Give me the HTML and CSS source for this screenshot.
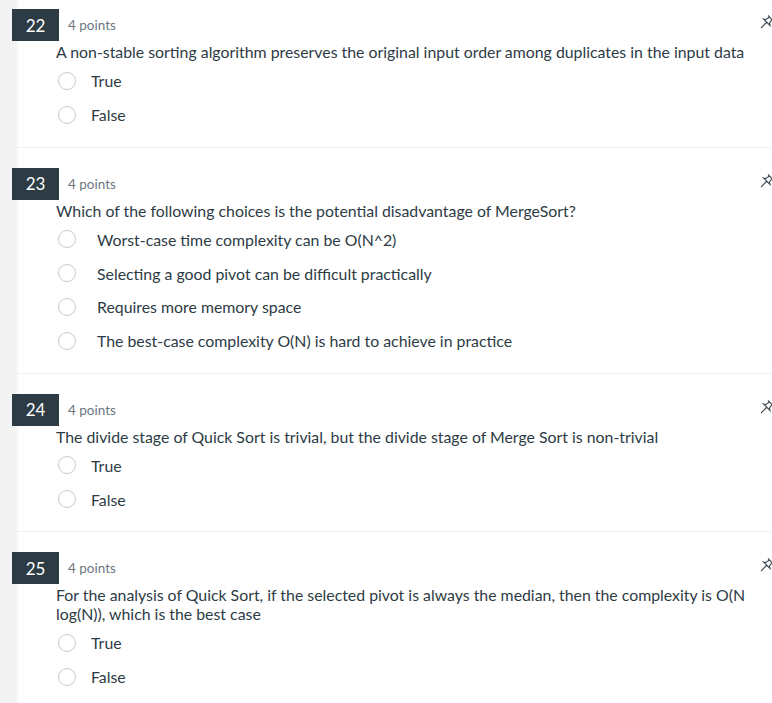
FILE: index.html
```html
<!DOCTYPE html>
<html>
<head>
<meta charset="utf-8">
<link rel="stylesheet" href="styles.css">
</head>
<body>
<div class="page">
  <div class="question">
    <div class="q-header">
      <span class="q-num">22</span>
      <span class="q-points">4 points</span>
      <svg class="pin" viewBox="0 0 16 16" width="16" height="16"><g fill="none" stroke="#3d4a52" stroke-width="1.1"><path d="M9 1.5 L14.5 7 M10.5 3 L7 5.5 L4.5 5 L11 11.5 L10.5 9 L13 5.5 M7.5 8.5 L2 14"/></g></svg>
    </div>
    <div class="q-text">A non-stable sorting algorithm preserves the original input order among duplicates in the input data</div>
    <div class="answers">
      <div class="answer"><span class="radio"></span><span class="a-text">True</span></div>
      <div class="answer"><span class="radio"></span><span class="a-text">False</span></div>
    </div>
  </div>

  <div class="question">
    <div class="q-header">
      <span class="q-num">23</span>
      <span class="q-points">4 points</span>
      <svg class="pin" viewBox="0 0 16 16" width="16" height="16"><g fill="none" stroke="#3d4a52" stroke-width="1.1"><path d="M9 1.5 L14.5 7 M10.5 3 L7 5.5 L4.5 5 L11 11.5 L10.5 9 L13 5.5 M7.5 8.5 L2 14"/></g></svg>
    </div>
    <div class="q-text">Which of the following choices is the potential disadvantage of MergeSort?</div>
    <div class="answers multi">
      <div class="answer"><span class="radio"></span><span class="a-text">Worst-case time complexity can be O(N^2)</span></div>
      <div class="answer"><span class="radio"></span><span class="a-text">Selecting a good pivot can be difficult practically</span></div>
      <div class="answer"><span class="radio"></span><span class="a-text">Requires more memory space</span></div>
      <div class="answer"><span class="radio"></span><span class="a-text">The best-case complexity O(N) is hard to achieve in practice</span></div>
    </div>
  </div>

  <div class="question">
    <div class="q-header">
      <span class="q-num">24</span>
      <span class="q-points">4 points</span>
      <svg class="pin" viewBox="0 0 16 16" width="16" height="16"><g fill="none" stroke="#3d4a52" stroke-width="1.1"><path d="M9 1.5 L14.5 7 M10.5 3 L7 5.5 L4.5 5 L11 11.5 L10.5 9 L13 5.5 M7.5 8.5 L2 14"/></g></svg>
    </div>
    <div class="q-text">The divide stage of Quick Sort is trivial, but the divide stage of Merge Sort is non-trivial</div>
    <div class="answers">
      <div class="answer"><span class="radio"></span><span class="a-text">True</span></div>
      <div class="answer"><span class="radio"></span><span class="a-text">False</span></div>
    </div>
  </div>

  <div class="question">
    <div class="q-header">
      <span class="q-num">25</span>
      <span class="q-points">4 points</span>
      <svg class="pin" viewBox="0 0 16 16" width="16" height="16"><g fill="none" stroke="#3d4a52" stroke-width="1.1"><path d="M9 1.5 L14.5 7 M10.5 3 L7 5.5 L4.5 5 L11 11.5 L10.5 9 L13 5.5 M7.5 8.5 L2 14"/></g></svg>
    </div>
    <div class="q-text">For the analysis of Quick Sort, if the selected pivot is always the median, then the complexity is O(N log(N)), which is the best case</div>
    <div class="answers">
      <div class="answer"><span class="radio"></span><span class="a-text">True</span></div>
      <div class="answer"><span class="radio"></span><span class="a-text">False</span></div>
    </div>
  </div>
</div>
</body>
</html>
```

FILE: styles.css
```css
html, body {
  margin: 0;
  padding: 0;
}
body {
  width: 772px;
  height: 703px;
  overflow: hidden;
  background: linear-gradient(to right, #f3f3f3 0, #f3f3f3 16px, #fafafa 18px, #ffffff 19px);
  font-family: Lato, "Liberation Sans", sans-serif;
  color: #2d3b45;
}
.page {
  margin-top: -12px;
}
.question {
  position: relative;
  padding: 20px 0 15px 12px;
  border-top: 1px solid #f0f0f0;
}
.q-header {
  display: flex;
  align-items: center;
  height: 32px;
}
.q-num {
  width: 47px;
  height: 32px;
  background: #2d3b45;
  color: #ffffff;
  font-size: 17px;
  display: flex;
  align-items: center;
  justify-content: center;
}
.q-points {
  margin-left: 9px;
  font-size: 13.5px;
  color: #6b7780;
}
.pin {
  position: absolute;
  left: 759px;
  top: 25px;
}
.q-text {
  margin: 1px 0 0 44px;
  font-size: 15.85px;
  line-height: 19px;
}
.answers {
  margin-top: 3px;
}
.answer {
  display: flex;
  align-items: center;
  height: 33.75px;
}
.radio {
  width: 18px;
  height: 18px;
  box-sizing: border-box;
  border: 1px solid #c7cdd1;
  border-radius: 50%;
  margin-left: 46px;
  background: #fff;
}
.a-text {
  margin-left: 15px;
  font-size: 15.85px;
}
.multi .a-text {
  margin-left: 21px;
}
```
